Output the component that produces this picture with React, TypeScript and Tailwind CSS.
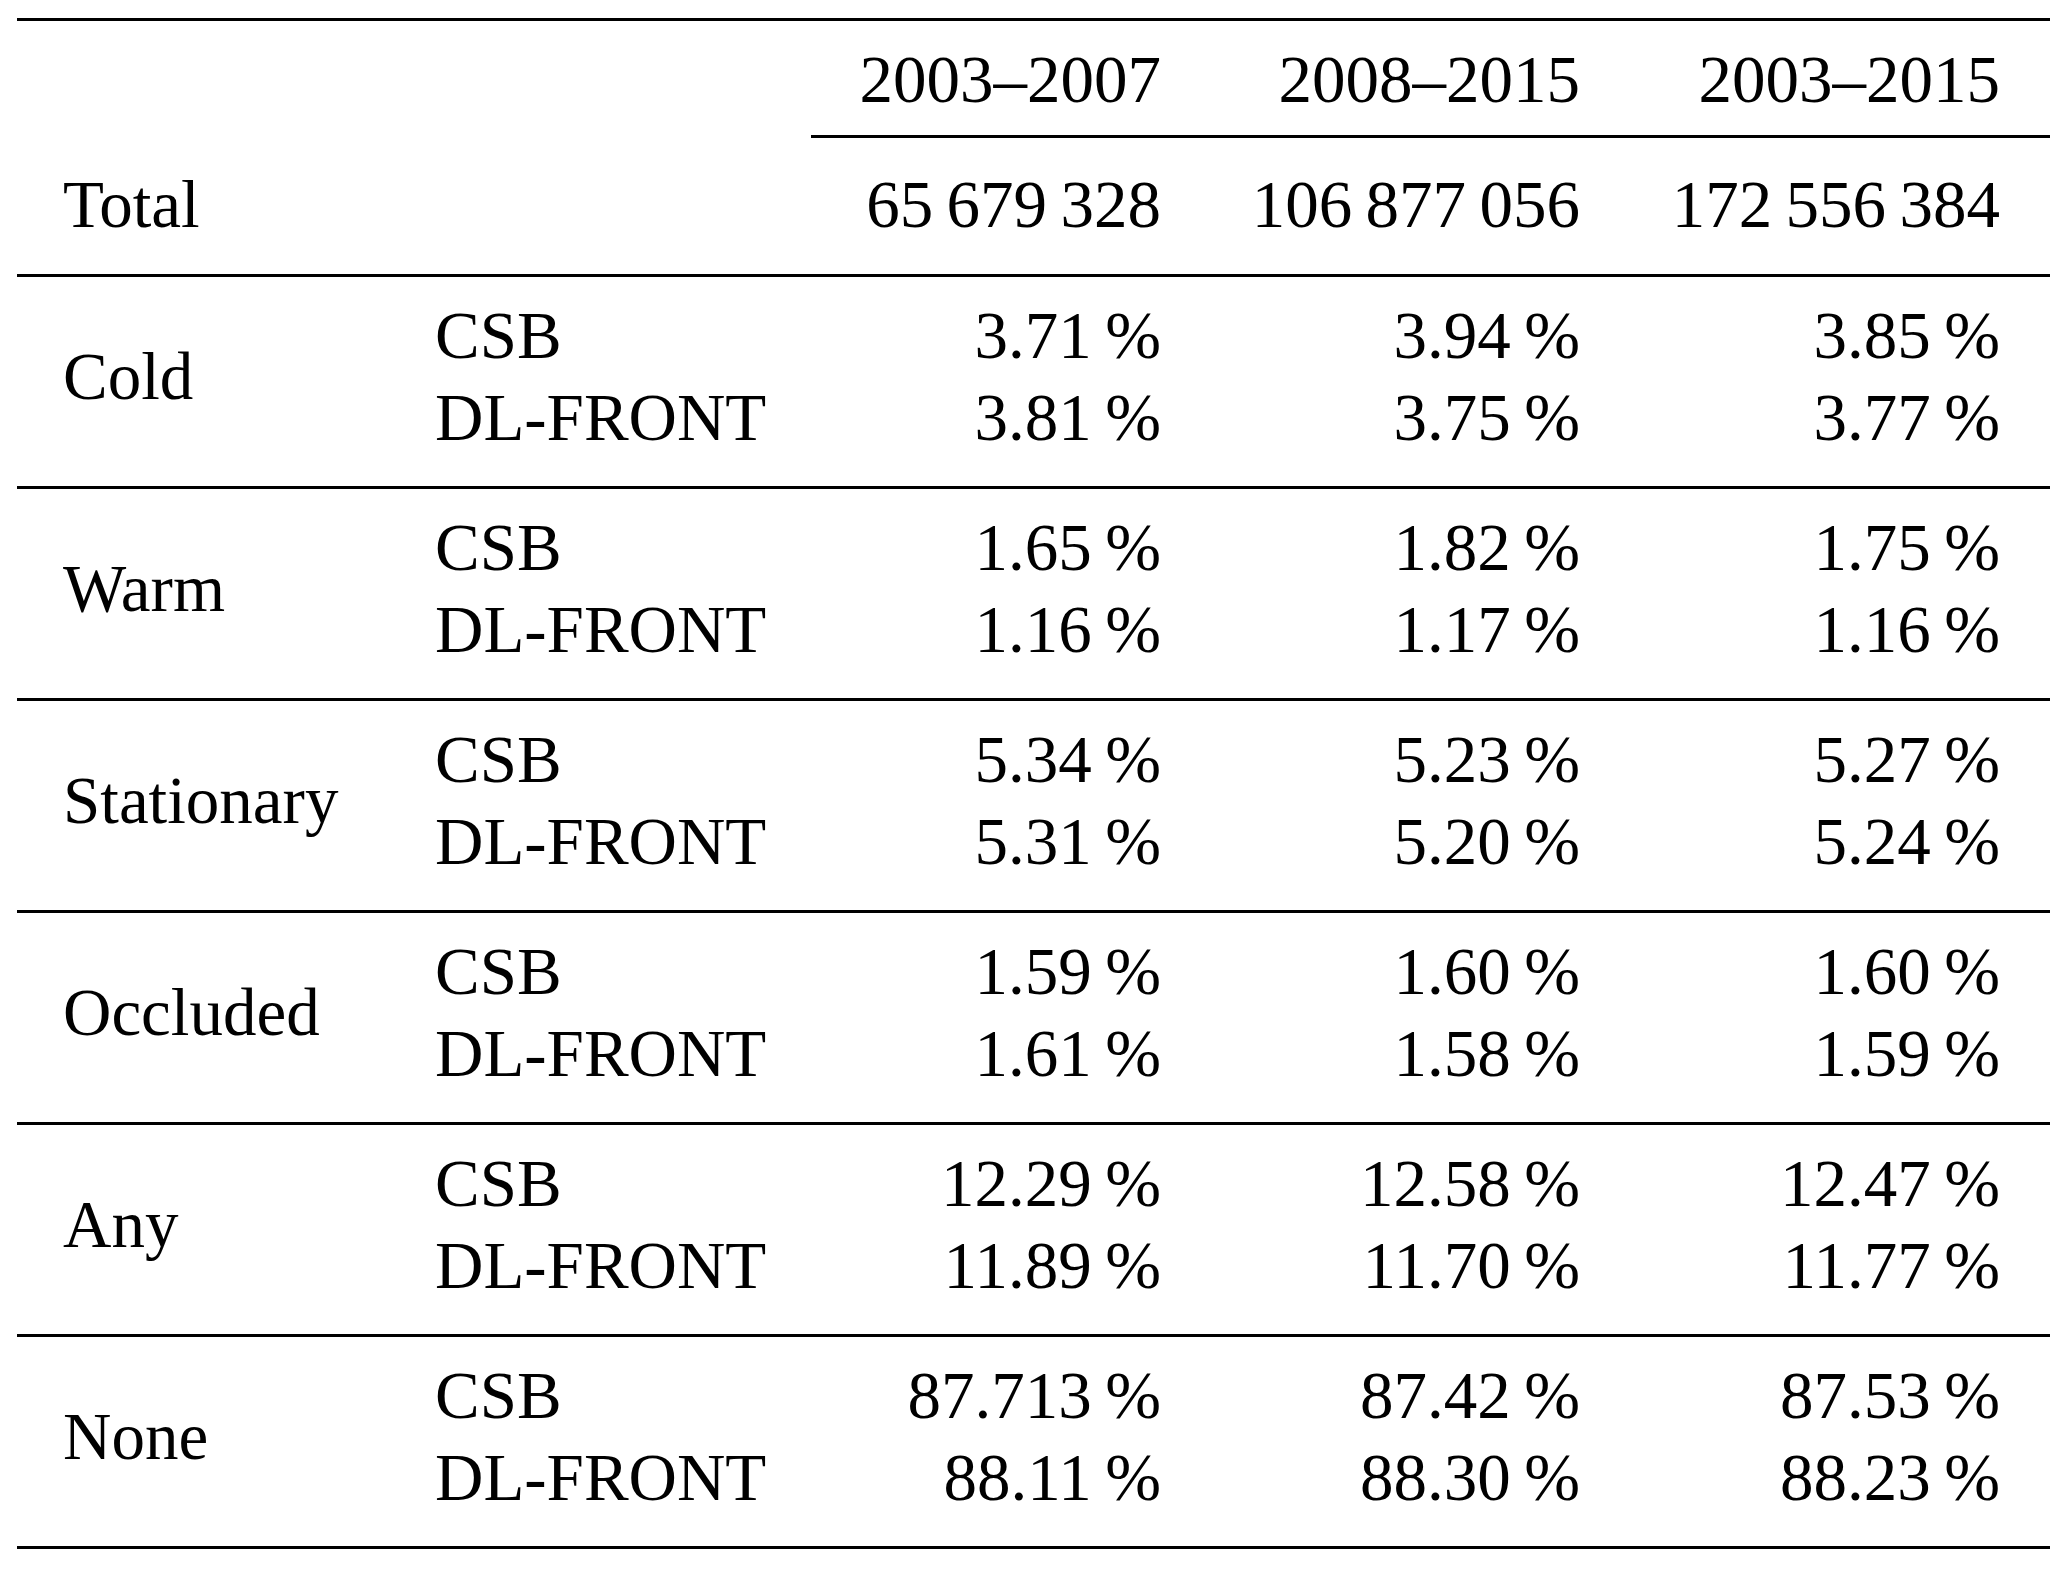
const groups = [
  {
    name: "Cold",
    rows: [
      ["CSB", "3.71", "3.94", "3.85"],
      ["DL-FRONT", "3.81", "3.75", "3.77"],
    ],
  },
  {
    name: "Warm",
    rows: [
      ["CSB", "1.65", "1.82", "1.75"],
      ["DL-FRONT", "1.16", "1.17", "1.16"],
    ],
  },
  {
    name: "Stationary",
    rows: [
      ["CSB", "5.34", "5.23", "5.27"],
      ["DL-FRONT", "5.31", "5.20", "5.24"],
    ],
  },
  {
    name: "Occluded",
    rows: [
      ["CSB", "1.59", "1.60", "1.60"],
      ["DL-FRONT", "1.61", "1.58", "1.59"],
    ],
  },
  {
    name: "Any",
    rows: [
      ["CSB", "12.29", "12.58", "12.47"],
      ["DL-FRONT", "11.89", "11.70", "11.77"],
    ],
  },
  {
    name: "None",
    rows: [
      ["CSB", "87.713", "87.42", "87.53"],
      ["DL-FRONT", "88.11", "88.30", "88.23"],
    ],
  },
];

const Rule = () => <div className="h-[3px] w-full bg-black" />;

const cols =
  "grid grid-cols-[372px_307px_419px_419px_420px] pl-[46px] pr-[50px] whitespace-nowrap";

export default function App() {
  return (
    <div className="min-h-[1569px] w-full bg-white text-black">
      <div
        className="ml-[17px] w-[2033px] pt-[18px] text-[67px] leading-[82px]"
        style={{ fontFamily: '"Liberation Serif", "Times New Roman", serif' }}
      >
        <Rule />

        {/* header */}
        <div className={`${cols} pt-[17px] pb-[15px]`}>
          <div />
          <div />
          <div className="text-right">2003–2007</div>
          <div className="text-right">2008–2015</div>
          <div className="text-right">2003–2015</div>
        </div>
        <div className="ml-[794px] h-[3px] bg-black" />

        {/* total */}
        <div className={`${cols} pt-[25px] pb-[29px]`}>
          <div className="col-span-2">Total</div>
          <div className="text-right">65{"\u2009"}679{"\u2009"}328</div>
          <div className="text-right">106{"\u2009"}877{"\u2009"}056</div>
          <div className="text-right">172{"\u2009"}556{"\u2009"}384</div>
        </div>

        {groups.map((g) => (
          <div key={g.name}>
            <Rule />
            <div className={`${cols} pt-[17px] pb-[28px]`}>
              <div className="row-span-2 flex items-center">{g.name}</div>
              {g.rows.map((r) => (
                <div key={r[0]} className="contents">
                  <div>{r[0]}</div>
                  {r.slice(1).map((v, i) => (
                    <div key={i} className="text-right">
                      {v}
                      {"\u2009"}%
                    </div>
                  ))}
                </div>
              ))}
            </div>
          </div>
        ))}
        <Rule />
      </div>
    </div>
  );
}
